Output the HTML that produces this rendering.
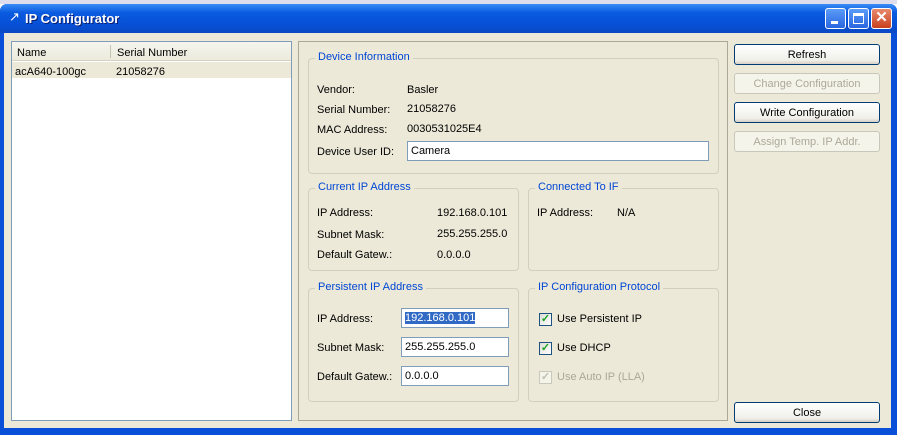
<!DOCTYPE html><html><head><style>
*{margin:0;padding:0;box-sizing:border-box}
body{width:897px;height:435px;overflow:hidden;background:#fff;font-family:"Liberation Sans",sans-serif;font-size:11px;color:#000;position:relative}
.a{position:absolute}
.win{left:0;top:4px;width:897px;height:431px;background:#0a4fd8;border-radius:7px 7px 0 0}
.title{left:0;top:4px;width:897px;height:29px;background:linear-gradient(#3a8cf5,#0a5be0 30%,#0650d6 70%,#0a48c4);border-radius:7px 7px 0 0}
.body{left:4px;top:33px;width:887px;height:395px;background:#ece9d8}
.panel{border:1px solid #aca899;background:#ece9d8}
.grp{border:1px solid #d0d0bf;border-radius:4px}
.gt{position:absolute;top:-8px;left:6px;background:#ece9d8;color:#0046d5;padding:0 3px}
.btn{position:absolute;left:734px;width:146px;height:21px;border:1px solid #003c74;border-radius:3px;background:linear-gradient(#fff,#f0f0ea 80%,#d6d0c5);text-align:center;line-height:21px}
.btn.d{border-color:#c9c7ba;color:#aca899;background:#f5f4ea}
.inp{position:absolute;background:#fff;border:1px solid #7f9db9;height:20px;line-height:19px;padding-left:3px}
.cb{position:absolute;width:13px;height:13px;border:1px solid #1c5180;background:linear-gradient(135deg,#dcdcd7,#fff);color:#21a121;font-size:11px;line-height:11px;text-align:center;font-weight:bold}
</style></head><body>
<div class="a" style="left:0;top:0;width:897px;height:4px;background:#dde;"></div>
<div class="a win"></div>
<div class="a title"></div>
<div class="a" style="left:9px;top:9px;color:#fff;font-size:13px">&#8599;</div>
<div class="a" style="left:25px;top:11px;color:#fff;font-weight:bold;font-size:13px;text-shadow:1px 1px #0a1f73">IP Configurator</div>
<div class="a" style="left:825px;top:8px;width:21px;height:21px;border:1px solid #fff;border-radius:3px;background:linear-gradient(#5a9cf8,#2a66e0)"><div class="a" style="left:5px;top:12px;width:7px;height:3px;background:#fff"></div></div>
<div class="a" style="left:848px;top:8px;width:21px;height:21px;border:1px solid #fff;border-radius:3px;background:linear-gradient(#5a9cf8,#2a66e0)"><div class="a" style="left:4px;top:4px;width:11px;height:11px;border:1px solid #fff;border-top-width:3px"></div></div>
<div class="a" style="left:871px;top:8px;width:21px;height:21px;border:1px solid #fff;border-radius:3px;background:linear-gradient(#e88a6e,#c8401e);color:#fff;font-weight:bold;font-size:15px;text-align:center;line-height:18px">✕</div>
<div class="a body"></div>
<div class="a" style="left:11px;top:41px;width:281px;height:380px;background:#fff;border:1px solid #7f9db9"></div>
<div class="a" style="left:12px;top:42px;width:279px;height:19px;background:linear-gradient(#f6f5ef,#ebeadb);border-bottom:1px solid #d6d2c2"></div>
<div class="a" style="left:110px;top:45px;width:1px;height:13px;background:#c7c5b2"></div>
<div class="a" style="left:17px;top:47px">Name</div>
<div class="a" style="left:117px;top:47px">Serial Number</div>
<div class="a" style="left:12px;top:62px;width:279px;height:16px;background:#ece9d8"></div>
<div class="a" style="left:15px;top:66px">acA640-100gc</div>
<div class="a" style="left:116px;top:66px">21058276</div>
<div class="a panel" style="left:298px;top:41px;width:430px;height:380px"></div>
<div class="a grp" style="left:308px;top:58px;width:411px;height:116px"><span class="gt">Device Information</span></div>
<div class="a" style="left:317px;top:84px">Vendor:</div><div class="a" style="left:407px;top:84px">Basler</div>
<div class="a" style="left:317px;top:104px">Serial Number:</div><div class="a" style="left:407px;top:103px">21058276</div>
<div class="a" style="left:317px;top:124px">MAC Address:</div><div class="a" style="left:407px;top:123px">0030531025E4</div>
<div class="a" style="left:317px;top:146px">Device User ID:</div>
<div class="inp" style="left:407px;top:141px;width:302px">Camera</div>
<div class="a grp" style="left:308px;top:188px;width:211px;height:83px"><span class="gt">Current IP Address</span></div>
<div class="a" style="left:317px;top:207px">IP Address:</div><div class="a" style="left:437px;top:207px">192.168.0.101</div>
<div class="a" style="left:317px;top:229px">Subnet Mask:</div><div class="a" style="left:437px;top:228px">255.255.255.0</div>
<div class="a" style="left:317px;top:249px">Default Gatew.:</div><div class="a" style="left:437px;top:249px">0.0.0.0</div>
<div class="a grp" style="left:528px;top:188px;width:191px;height:83px"><span class="gt">Connected To IF</span></div>
<div class="a" style="left:537px;top:207px">IP Address:</div><div class="a" style="left:617px;top:207px">N/A</div>
<div class="a grp" style="left:308px;top:288px;width:211px;height:114px"><span class="gt">Persistent IP Address</span></div>
<div class="a" style="left:317px;top:313px">IP Address:</div>
<div class="inp" style="left:401px;top:308px;width:108px"><span style="background:#316ac5;color:#fff">192.168.0.101</span></div>
<div class="a" style="left:317px;top:342px">Subnet Mask:</div>
<div class="inp" style="left:401px;top:337px;width:108px">255.255.255.0</div>
<div class="a" style="left:317px;top:371px">Default Gatew.:</div>
<div class="inp" style="left:401px;top:366px;width:108px">0.0.0.0</div>
<div class="a grp" style="left:528px;top:288px;width:191px;height:114px"><span class="gt">IP Configuration Protocol</span></div>
<div class="cb" style="left:539px;top:313px">✓</div><div class="a" style="left:557px;top:313px">Use Persistent IP</div>
<div class="cb" style="left:539px;top:342px">✓</div><div class="a" style="left:557px;top:342px">Use DHCP</div>
<div class="cb" style="left:539px;top:371px;border-color:#cac8bb;background:#f5f4ea;color:#c0c0b0">✓</div><div class="a" style="left:557px;top:371px;color:#aca899">Use Auto IP (LLA)</div>
<div class="btn" style="top:44px">Refresh</div>
<div class="btn d" style="top:73px">Change Configuration</div>
<div class="btn" style="top:102px">Write Configuration</div>
<div class="btn d" style="top:131px">Assign Temp. IP Addr.</div>
<div class="btn" style="top:402px">Close</div>
</body></html>
